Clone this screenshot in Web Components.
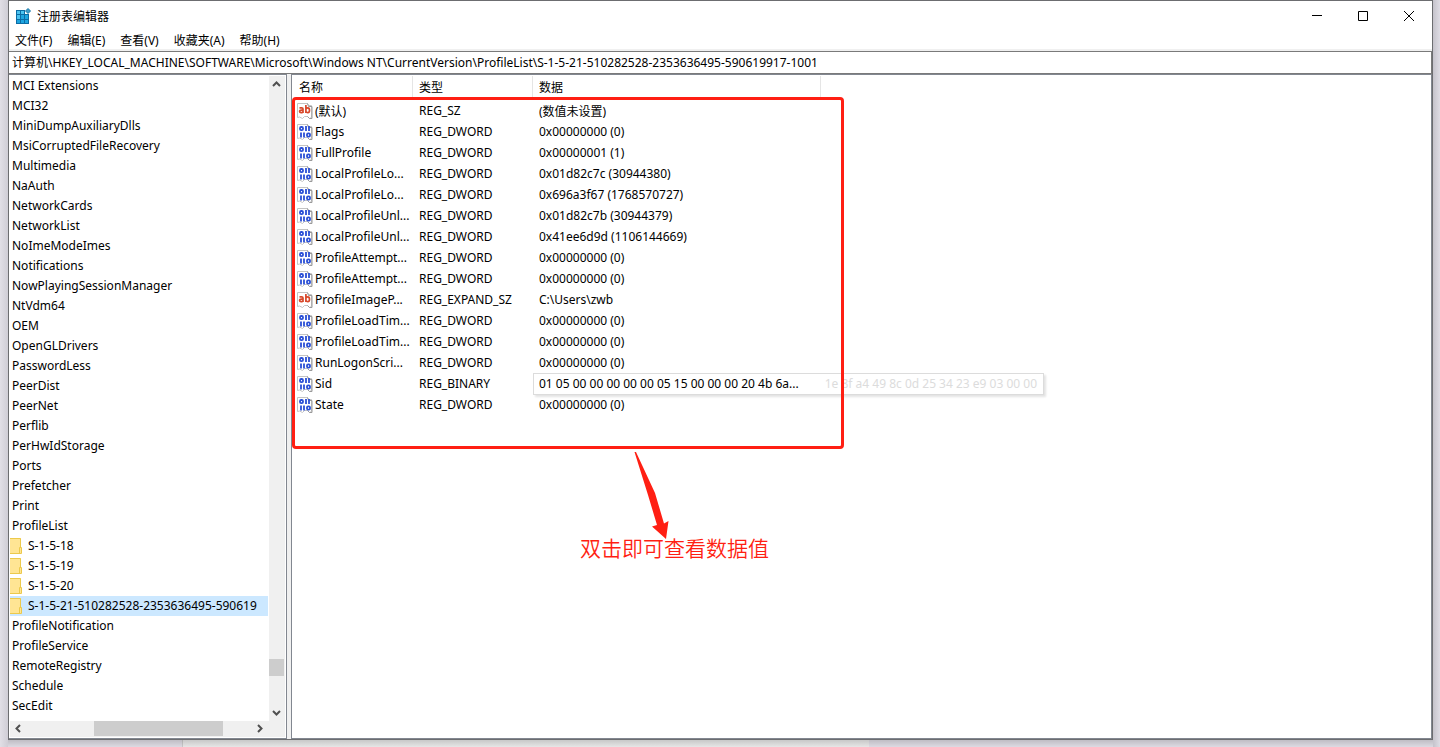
<!DOCTYPE html>
<html lang="zh-CN">
<head>
<meta charset="utf-8">
<title>注册表编辑器</title>
<style>
  body {
    margin: 0;
    height: 100vh;
    overflow: hidden;
    background: #dddbe4;
    font-family: "Noto Sans", "Noto Sans CJK SC", sans-serif;
    font-size: 12px;
    color: #000;
  }
</style>
</head>
<body>

<regedit-window heading="注册表编辑器">
  <regedit-menu slot="menu" items="文件(F),编辑(E),查看(V),收藏夹(A),帮助(H)"></regedit-menu>
  <regedit-address slot="address" path="计算机\HKEY_LOCAL_MACHINE\SOFTWARE\Microsoft\Windows NT\CurrentVersion\ProfileList\S-1-5-21-510282528-2353636495-590619917-1001"></regedit-address>
  <regedit-tree slot="tree"></regedit-tree>
  <regedit-values slot="values">
    <regedit-note>双击即可查看数据值</regedit-note>
  </regedit-values>
</regedit-window>

<script>
/**
 * The window frame: title bar, menu, address bar and the two panes.
 */
class RegeditWindow extends HTMLElement {

  constructor() {
    super();
    this.attachShadow({ mode: 'open' });
  }

  connectedCallback() {
    this.shadowRoot.innerHTML = `
      <style>
        :host {
          display: flex;
          flex-direction: column;
          height: 100vh;
          box-sizing: border-box;
          padding: 0 7px 7px 8px;
          background:
            linear-gradient(90deg, #e1dfe6, #cfcdd5 8px, transparent 8px),
            linear-gradient(270deg, #dedce4, #c5c3cb 7px, transparent 7px),
            linear-gradient(0deg, transparent, #00000022 7px),
            linear-gradient(90deg, #dcdae2 182px, #c8c8c8 182px, #c8c8c8 183px, #e6e6e6 183px, #e6e6e6 869px, #dcdae2 869px);
        }
        .frame {
          flex: 1;
          min-height: 0;
          display: flex;
          flex-direction: column;
          border: 1px solid #6c6d70;
          background: #fff;
        }
        header {
          display: flex;
          align-items: center;
          height: 29px;
          padding-left: 6px;
        }
        h1 {
          flex: 1;
          margin: 0 0 0 6px;
          font-size: 12px;
          font-weight: normal;
        }
        header button {
          width: 46px;
          height: 29px;
          padding: 0;
          border: 0;
          background: none;
        }
        header button svg { display: block; margin: auto; }
        .panes {
          flex: 1;
          min-height: 0;
          display: grid;
          grid-template-columns: 278px 1fr;
          gap: 4px;
          background: #f0f0f0;
        }
        .pane {
          display: flex;
          min-width: 0;
          min-height: 0;
          background: #fff;
          border: 1px solid #828790;
        }
        .pane:first-child { border-left: 0; }
        ::slotted(*) { flex: 1; min-width: 0; }
        .bar ::slotted(*) { display: block; }
      </style>
      <div class="frame">
        <header>
          <svg width="16" height="16" viewBox="0 0 16 16" aria-hidden="true">
            <path fill="#0b6ca5" d="M1 2h9v4h4v10H1z"/>
            <path fill="#4cc3f0" d="M2 3h3v3H2zM6 3h3v3H6zM2 7h3v4H2z"/>
            <path fill="#1ea5e0" d="M6 7h3v4H6zM10 7h3v4h-3zM2 12h3v3H2zM6 12h3v3H6zM10 12h3v3h-3z"/>
            <path fill="#3d9cc8" stroke="#1577a8" d="M13 .5l2.500 2.500-2.500 2.500L10.500 3z"/>
          </svg>
          <h1></h1>
          <button aria-label="最小化"><svg width="10" height="10"><path d="M0 4.5h10" stroke="#000"/></svg></button>
          <button aria-label="最大化"><svg width="10" height="10"><path d="M.5.5h9v9h-9z" fill="none" stroke="#000"/></svg></button>
          <button aria-label="关闭"><svg width="10" height="10"><path d="M0 0l10 10M10 0L0 10" stroke="#000"/></svg></button>
        </header>
        <div class="bar"><slot name="menu"></slot></div>
        <div class="bar"><slot name="address"></slot></div>
        <div class="panes">
          <div class="pane"><slot name="tree"></slot></div>
          <div class="pane"><slot name="values"></slot></div>
        </div>
      </div>`;
    this.shadowRoot.querySelector('h1').textContent = this.getAttribute('heading');
  }
}

/**
 * The menu bar, one button for each entry of the "items" attribute.
 */
class RegeditMenu extends HTMLElement {

  constructor() {
    super();
    this.attachShadow({ mode: 'open' });
  }

  connectedCallback() {
    const buttons = this.getAttribute('items').split(',').map(item => `<button>${item}</button>`);
    this.shadowRoot.innerHTML = `
      <style>
        :host { display: block; }
        nav {
          display: flex;
          align-items: flex-end;
          height: 19px;
          gap: 15px;
          padding-left: 6px;
          border-bottom: 2px solid #f0f0f0;
        }
        button {
          padding: 0;
          border: 0;
          background: none;
          font: inherit;
          line-height: 16px;
          color: inherit;
        }
      </style>
      <nav>${buttons.join('')}</nav>`;
  }
}

/**
 * The address bar with the path of the open key.
 */
class RegeditAddress extends HTMLElement {

  constructor() {
    super();
    this.attachShadow({ mode: 'open' });
  }

  connectedCallback() {
    this.shadowRoot.innerHTML = `
      <style>
        :host { display: block; }
        input {
          display: block;
          box-sizing: border-box;
          width: 100%;
          height: 23px;
          padding: 0 3px 1px;
          border: 1px solid #7a7a7a;
          border-left: 0;
          outline: 0;
          background: #fff;
          font: inherit;
          color: inherit;
        }
      </style>
      <input type="text" aria-label="地址">`;
    this.shadowRoot.querySelector('input').value = this.getAttribute('path');
  }
}

/**
 * A scroll bar. Attributes: direction (vertical or horizontal),
 * before and after (free track on both sides of the thumb), size (thumb length).
 */
class RegeditScrollbar extends HTMLElement {

  constructor() {
    super();
    this.attachShadow({ mode: 'open' });
  }

  connectedCallback() {
    const vertical = this.getAttribute('direction') === 'vertical';
    const back = vertical ? 'M4 10l3.500-3.500L11 10' : 'M10 4L6.500 7.500 10 11';
    const forth = vertical ? 'M4 6l3.500 3.500L11 6' : 'M5 4l3.500 3.500L5 11';
    this.shadowRoot.innerHTML = `
      <style>
        :host {
          display: flex;
          flex-direction: ${vertical ? 'column' : 'row'};
          background: #f0f0f0;
        }
        button {
          flex: none;
          width: 16px;
          height: 16px;
          padding: 0;
          border: 0;
          background: none;
        }
        svg { display: block; fill: none; stroke: #505050; stroke-width: 2; }
        .before { flex: ${this.getAttribute('before')}; }
        .after { flex: ${this.getAttribute('after')}; }
        .thumb {
          flex: none;
          background: #cdcdcd;
          ${vertical ? 'margin-right' : 'margin-bottom'}: 1px;
          ${vertical ? 'height' : 'width'}: ${this.getAttribute('size')}px;
        }
      </style>
      <button aria-label="${vertical ? '向上' : '向左'}"><svg width="16" height="16"><path d="${back}"/></svg></button>
      <div class="before"></div>
      <div class="thumb"></div>
      <div class="after"></div>
      <button aria-label="${vertical ? '向下' : '向右'}"><svg width="16" height="16"><path d="${forth}"/></svg></button>`;
  }
}

/**
 * The key tree, scrolled to the ProfileList key.
 */
class RegeditTree extends HTMLElement {

  constructor() {
    super();
    this.attachShadow({ mode: 'open' });
  }

  connectedCallback() {
    const keys = [
      'MCI Extensions', 'MCI32', 'MiniDumpAuxiliaryDlls', 'MsiCorruptedFileRecovery', 'Multimedia',
      'NaAuth', 'NetworkCards', 'NetworkList', 'NoImeModeImes', 'Notifications',
      'NowPlayingSessionManager', 'NtVdm64', 'OEM', 'OpenGLDrivers', 'PasswordLess', 'PeerDist',
      'PeerNet', 'Perflib', 'PerHwIdStorage', 'Ports', 'Prefetcher', 'Print', 'ProfileList',
      '>S-1-5-18', '>S-1-5-19', '>S-1-5-20', '>S-1-5-21-510282528-2353636495-590619',
      'ProfileNotification', 'ProfileService', 'RemoteRegistry', 'Schedule', 'SecEdit'
    ];
    const folder = `
      <svg width="13" height="16" viewBox="0 0 13 16" aria-hidden="true">
        <path fill="#ffe594" d="M0 0h11v16H0z"/>
        <path fill="none" stroke="#ecc94b" d="M0 .5h10.500v9M0 15.500h11.500v-6h-2v5.500"/>
      </svg>`;
    const rows = keys.map(key => {
      if (key[0] !== '>') {
        return `<li role="treeitem">${key}</li>`;
      }
      const selected = key.startsWith('>S-1-5-21');
      return `<li role="treeitem" class="sub" aria-selected="${selected}">${folder}<span>${key.slice(1)}</span></li>`;
    });
    this.shadowRoot.innerHTML = `
      <style>
        :host {
          display: grid;
          grid-template-columns: 1fr 16px;
          grid-template-rows: 1fr 16px;
          padding: 1px;
          background: #fff;
        }
        ul {
          margin: 0;
          padding: 0 1px 0 0;
          list-style: none;
          overflow: hidden;
          min-height: 0;
        }
        li {
          height: 20px;
          line-height: 20px;
          padding-left: 2px;
          white-space: nowrap;
        }
        .sub {
          display: flex;
          align-items: center;
          gap: 5px;
          padding-left: 0;
        }
        svg { flex: none; }
        [aria-selected="true"] { background: #cce8ff; }
        .corner { background: #f0f0f0; }
      </style>
      <ul role="tree">${rows.join('')}</ul>
      <regedit-scrollbar direction="vertical" before="567" after="29" size="17"></regedit-scrollbar>
      <regedit-scrollbar direction="horizontal" before="68" after="30" size="129"></regedit-scrollbar>
      <div class="corner"></div>`;
  }
}

/**
 * The list of values of the open key, with a data tooltip over the Sid row.
 */
class RegeditValues extends HTMLElement {

  constructor() {
    super();
    this.attachShadow({ mode: 'open' });
  }

  connectedCallback() {
    const values = [
      ['(默认)', 'REG_SZ', '(数值未设置)'],
      ['Flags', 'REG_DWORD', '0x00000000 (0)'],
      ['FullProfile', 'REG_DWORD', '0x00000001 (1)'],
      ['LocalProfileLo...', 'REG_DWORD', '0x01d82c7c (30944380)'],
      ['LocalProfileLo...', 'REG_DWORD', '0x696a3f67 (1768570727)'],
      ['LocalProfileUnl...', 'REG_DWORD', '0x01d82c7b (30944379)'],
      ['LocalProfileUnl...', 'REG_DWORD', '0x41ee6d9d (1106144669)'],
      ['ProfileAttempt...', 'REG_DWORD', '0x00000000 (0)'],
      ['ProfileAttempt...', 'REG_DWORD', '0x00000000 (0)'],
      ['ProfileImageP...', 'REG_EXPAND_SZ', 'C:\\Users\\zwb'],
      ['ProfileLoadTim...', 'REG_DWORD', '0x00000000 (0)'],
      ['ProfileLoadTim...', 'REG_DWORD', '0x00000000 (0)'],
      ['RunLogonScri...', 'REG_DWORD', '0x00000000 (0)'],
      ['Sid', 'REG_BINARY', '01 05 00 00 00 00 00 05 15 00 00 00 20 4b 6a...'],
      ['State', 'REG_DWORD', '0x00000000 (0)']
    ];
    const page = `
      <path d="M.5.5h10l1 2h3v12l-2 1-2-2h-3l-2 2-3-1.500-2 .5z" fill="#fff" stroke="#c4c4c4"/>
      <path d="M10.500.5l1 3h3.500v12l-2.500 0-2-2" fill="none" stroke="#9a9a9a"/>`;
    const icons = {
      text: `<svg width="16" height="16" aria-hidden="true">${page}
        <g fill="none" stroke="#d8482a" stroke-width="1.7">
          <path d="M2.500 4.800h2.200q1.300 0 1.300 1.200v4M6 7.200H4.200Q2.600 7.200 2.600 8.400t1.500 1.200Q6 9.600 6 8.200"/>
          <path d="M8.900 2v8M8.900 6.200q.5-1.400 1.900-1.400 1.700 0 1.700 2.400t-1.700 2.400q-1.400 0-1.900-1.400"/>
        </g></svg>`,
      binary: `<svg width="16" height="16" aria-hidden="true">${page}
        <g fill="none" stroke="#2a4fd6" stroke-width="1.800">
          <rect x="3" y="3" width="3" height="3.200" rx="1.200"/>
          <path d="M9 2v5M12 2v5M4 8.500v5M7 8.500v5"/>
          <rect x="10" y="9.400" width="3" height="3.200" rx="1.200"/>
        </g></svg>`
    };
    const rows = values.map(([name, type, data]) => {
      const icon = type.endsWith('_SZ') ? icons.text : icons.binary;
      const tip = name === 'Sid' ? '<span class="tip" role="tooltip">1e 8f a4 49 8c 0d 25 34 23 e9 03 00 00</span>' : '';
      return `<tr><td><div class="name">${icon}<span>${name}</span></div></td><td>${type}</td><td>${tip}<span class="data">${data}</span></td></tr>`;
    });
    this.shadowRoot.innerHTML = `
      <style>
        :host { display: block; position: relative; }
        table {
          table-layout: fixed;
          width: 529px;
          margin-top: 1px;
          border-collapse: separate;
          border-spacing: 0;
        }
        col:nth-child(1) { width: 121px; }
        col:nth-child(2) { width: 120px; }
        th, td {
          padding: 0 0 0 6px;
          text-align: left;
          font-weight: normal;
          white-space: nowrap;
        }
        th {
          height: 22px;
          padding-bottom: 2px;
          border-right: 1px solid #e5e5e5;
        }
        th:first-child { padding-left: 7px; }
        td { height: 21px; position: relative; }
        td:first-child { padding-left: 5px; }
        .name {
          display: flex;
          align-items: center;
          gap: 2px;
        }
        svg { flex: none; }
        .data { position: relative; }
        .tip {
          position: absolute;
          left: 0;
          top: 0;
          box-sizing: border-box;
          width: 511px;
          height: 22px;
          padding-right: 6px;
          border: 1px solid #dcdcdc;
          background: #fff;
          box-shadow: 2px 2px 2px #e4e4e4;
          color: #dcdcdc;
          line-height: 20px;
          text-align: right;
        }
      </style>
      <table>
        <colgroup><col><col><col></colgroup>
        <thead><tr><th>名称</th><th>类型</th><th>数据</th></tr></thead>
        <tbody>${rows.join('')}</tbody>
      </table>
      <slot></slot>`;
  }
}

/**
 * A red mark over the list: a box, an arrow and the slotted remark.
 */
class RegeditNote extends HTMLElement {

  constructor() {
    super();
    this.attachShadow({ mode: 'open' });
    this.shadowRoot.innerHTML = `
      <style>
        :host {
          position: absolute;
          left: 0;
          top: 22px;
          width: 552px;
          color: #ff1f13;
          pointer-events: none;
        }
        .box {
          box-sizing: border-box;
          height: 352px;
          border: 3px solid #ff1f13;
          border-radius: 4px;
        }
        svg { display: block; margin: 3px 0 0 342px; overflow: visible; }
        p {
          margin: 0 0 0 288px;
          font-size: 21px;
          font-weight: 350;
          line-height: 20px;
          white-space: nowrap;
        }
      </style>
      <div class="box"></div>
      <svg width="36" height="86" aria-hidden="true">
        <path fill="#ff1f13" d="M.5 0h1.500L21 41l9 30.500 4.500-2.500L32 87 18 74.500l5-1.500L14 43z"/>
      </svg>
      <p><slot></slot></p>`;
  }
}

/** Define the custom elements */
customElements.define('regedit-window', RegeditWindow);
customElements.define('regedit-menu', RegeditMenu);
customElements.define('regedit-address', RegeditAddress);
customElements.define('regedit-scrollbar', RegeditScrollbar);
customElements.define('regedit-tree', RegeditTree);
customElements.define('regedit-values', RegeditValues);
customElements.define('regedit-note', RegeditNote);
</script>
</body>
</html>
